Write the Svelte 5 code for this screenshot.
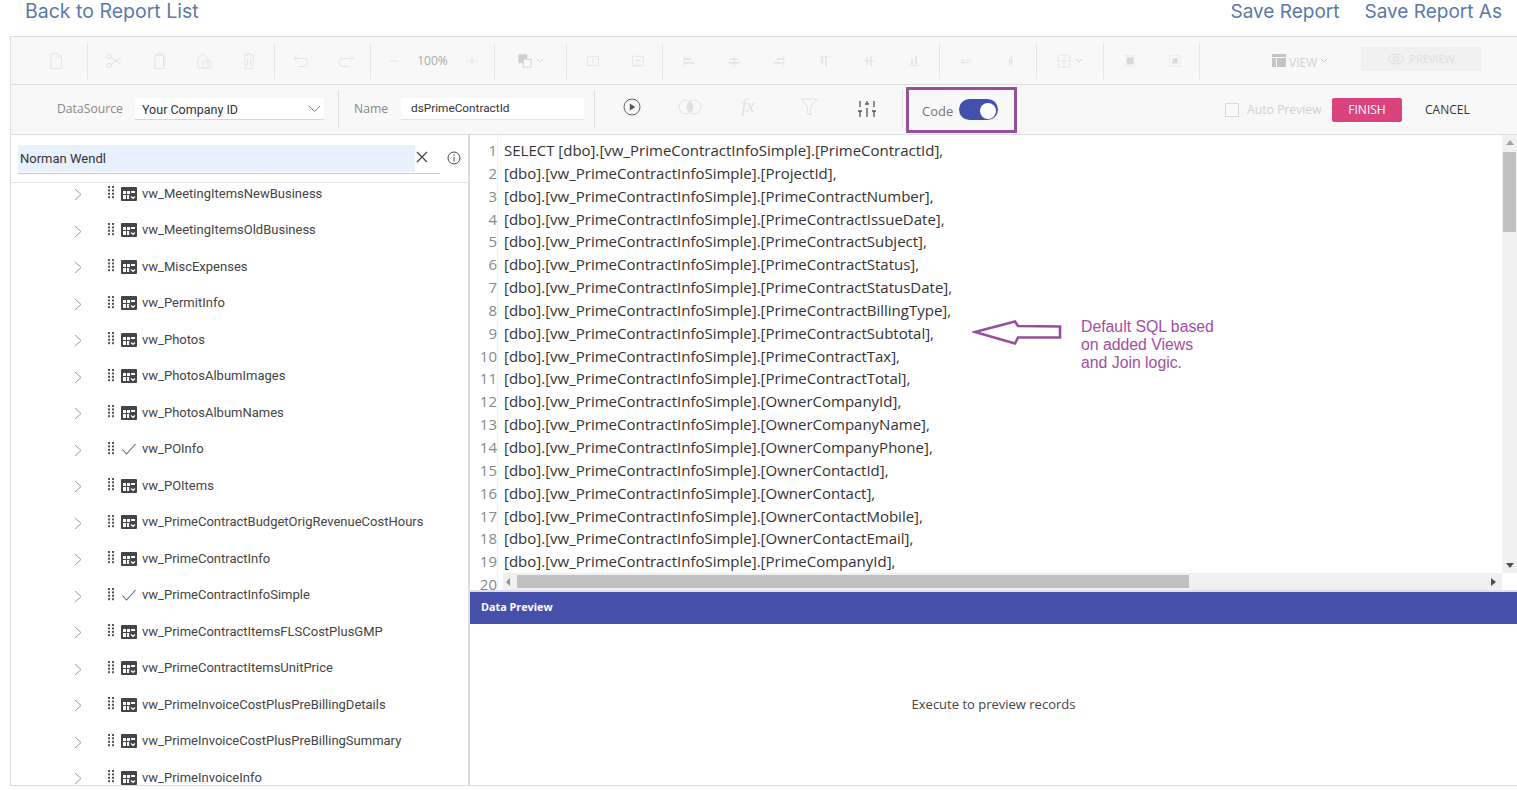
<script lang="ts">
    const views = [
        { name: 'vw_MeetingItemsNewBusiness' },
        { name: 'vw_MeetingItemsOldBusiness' },
        { name: 'vw_MiscExpenses' },
        { name: 'vw_PermitInfo' },
        { name: 'vw_Photos' },
        { name: 'vw_PhotosAlbumImages' },
        { name: 'vw_PhotosAlbumNames' },
        { name: 'vw_POInfo', checked: true },
        { name: 'vw_POItems' },
        { name: 'vw_PrimeContractBudgetOrigRevenueCostHours' },
        { name: 'vw_PrimeContractInfo' },
        { name: 'vw_PrimeContractInfoSimple', checked: true },
        { name: 'vw_PrimeContractItemsFLSCostPlusGMP' },
        { name: 'vw_PrimeContractItemsUnitPrice' },
        { name: 'vw_PrimeInvoiceCostPlusPreBillingDetails' },
        { name: 'vw_PrimeInvoiceCostPlusPreBillingSummary' },
        { name: 'vw_PrimeInvoiceInfo' }
    ];

    const columns = [
        'PrimeContractId', 'ProjectId', 'PrimeContractNumber', 'PrimeContractIssueDate',
        'PrimeContractSubject', 'PrimeContractStatus', 'PrimeContractStatusDate',
        'PrimeContractBillingType', 'PrimeContractSubtotal', 'PrimeContractTax',
        'PrimeContractTotal', 'OwnerCompanyId', 'OwnerCompanyName', 'OwnerCompanyPhone',
        'OwnerContactId', 'OwnerContact', 'OwnerContactMobile', 'OwnerContactEmail',
        'PrimeCompanyId'
    ];

    const lines = columns.map((c, i) => `${i === 0 ? 'SELECT ' : ''}[dbo].[vw_PrimeContractInfoSimple].[${c}],`);
    const gutter = Array.from({ length: 20 }, (_, i) => i + 1);
    const grip = [0, 1, 2, 3];
</script>

{#snippet alignIcon(d)}
    <span class="tool"><svg width="14" height="14" viewBox="0 0 18 18" fill="none" stroke="#e0e0e0"><path d={d} /></svg></span>
{/snippet}

<div class="page">
    <header class="top">
        <a href="#back">Back to Report List</a>
        <nav>
            <a href="#save">Save Report</a>
            <a href="#saveas">Save Report As</a>
        </nav>
    </header>

    <div class="shell">
        <div class="toolbar tools">
            <div class="group first">
                <span class="tool"><svg width="18" height="18" viewBox="0 0 18 18" fill="none" stroke="#e4e4e4"><path d="M4 1.500h7l3.500 3.500v11.500H4zM11 1.500V5h3.500" /></svg></span>
            </div>
            <div class="group">
                <span class="tool"><svg width="18" height="18" viewBox="0 0 18 18" fill="none" stroke="#e0e0e0"><circle cx="4" cy="4.500" r="2.200" /><circle cx="4" cy="13.500" r="2.200" /><path d="M6 5.500l10 7M6 12.500l10-7" /></svg></span>
                <span class="tool"><svg width="18" height="18" viewBox="0 0 18 18" fill="none" stroke="#e4e4e4"><path d="M5 3.500h8.500v13H5zM7 3.500V1.500h6l2 2v10h-2" /></svg></span>
                <span class="tool"><svg width="18" height="18" viewBox="0 0 18 18" fill="none" stroke="#e4e4e4"><path d="M3 6l5-4 5 4v10H3zM8 9h8v7H8z" /></svg></span>
                <span class="tool"><svg width="18" height="18" viewBox="0 0 18 18" fill="none" stroke="#e4e4e4"><path d="M3 3h12M5 3v13.500h8V3M7.500 6v8M10.500 6v8M7 3V1.500h4V3" /></svg></span>
            </div>
            <div class="group tight">
                <span class="tool"><svg width="18" height="18" viewBox="0 0 18 18" fill="none" stroke="#e4e4e4"><path d="M5 3L2 6.500 5 10M2 6.500h10a4 4 0 0 1 0 8H6" /></svg></span>
                <span class="tool"><svg width="18" height="18" viewBox="0 0 18 18" fill="none" stroke="#e4e4e4"><path d="M13 3l3 3.500L13 10M16 6.500H6a4 4 0 0 0 0 8h6" /></svg></span>
            </div>
            <div class="group">
                <span class="tool zoomitem"><svg width="10" height="10" viewBox="0 0 12 12" stroke="#e0e0e0"><path d="M1 6h10" /></svg></span>
                <span class="tool zoomitem pct">100%</span>
                <span class="tool zoomitem"><svg width="10" height="10" viewBox="0 0 12 12" stroke="#e0e0e0"><path d="M1 6h10M6 1v10" /></svg></span>
            </div>
            <div class="group">
                <span class="tool wide">
                    <svg width="14" height="14" viewBox="0 0 16 16" fill="none" stroke="#cfcfcf"><rect x="1" y="1" width="9" height="9" fill="#cfcfcf" /><rect x="6" y="6" width="9" height="9" fill="#f8f8f8" /></svg>
                    <svg width="8" height="6" viewBox="0 0 8 6" fill="none" stroke="#d4d4d4"><path d="M1 1l3 3 3-3" /></svg>
                </span>
            </div>
            <div class="group tight">
                {@render alignIcon('M2 3h14v12H2zM9 6v6M7.500 10.500L9 12l1.500-1.500')}
                {@render alignIcon('M2 3h14v12H2zM6 9h6M6 7.500h6')}
            </div>
            <div class="group">
                {@render alignIcon('M3 2v14M4 6h8M4 7h8M4 11h12M4 12h12')}
                {@render alignIcon('M9 2v14M4 6h10M4 7h10M2 11h14M2 12h14')}
                {@render alignIcon('M15 2v14M6 6h8M6 7h8M2 11h12M2 12h12')}
                {@render alignIcon('M2 3h14M6 4v8M7 4v8M11 4v12M12 4v12')}
                {@render alignIcon('M2 9h14M6 4v10M7 4v10M11 2v14M12 2v14')}
                {@render alignIcon('M2 15h14M6 6v8M7 6v8M11 2v12M12 2v12')}
            </div>
            <div class="group">
                {@render alignIcon('M2 8h14M2 11h14M5 7v5')}
                {@render alignIcon('M7 2v14M10 2v14M6 9h5M8.500 6v6')}
            </div>
            <div class="group">
                <span class="tool wide gridtool">
                    <svg width="14" height="14" viewBox="0 0 16 16" fill="none" stroke="#d8d8d8" stroke-dasharray="2 2"><rect x="1" y="1" width="14" height="14" /><path d="M8 1v14M1 8h14" /></svg>
                    <svg width="8" height="6" viewBox="0 0 8 6" fill="none" stroke="#d4d4d4"><path d="M1 1l3 3 3-3" /></svg>
                </span>
            </div>
            <div class="group tight">
                <span class="tool"><svg width="14" height="14" viewBox="0 0 16 16" fill="#d8d8d8" stroke="#e8e8e8"><rect x="4" y="4" width="8" height="8" /><path d="M1 2h14M1 14h14" fill="none" /></svg></span>
                <span class="tool"><svg width="14" height="14" viewBox="0 0 16 16" fill="#d8d8d8" stroke="#e8e8e8"><rect x="5" y="5" width="6" height="6" /><rect x="2" y="2" width="12" height="12" fill="none" /></svg></span>
            </div>
            <div class="view">
                <svg width="14" height="13" viewBox="0 0 14 13" fill="#c4c4c4"><rect width="14" height="3" /><rect y="4" width="4" height="9" /><rect x="5" y="4" width="9" height="9" /></svg>
                <span>VIEW</span>
                <svg width="8" height="6" viewBox="0 0 8 6" fill="none" stroke="#cccccc"><path d="M1 1l3 3 3-3" /></svg>
            </div>
            <div class="preview">
                <svg width="18" height="12" viewBox="0 0 18 12" fill="none" stroke="#dddddd"><path d="M1 6c2-3 5-5 8-5s6 2 8 5c-2 3-5 5-8 5S3 9 1 6z" /><circle cx="9" cy="6" r="2.500" /></svg>
                <span>PREVIEW</span>
            </div>
        </div>

        <div class="toolbar config">
            <label class="lbl source-lbl" for="src">DataSource</label>
            <div class="select" id="src">
                <span>Your Company ID</span>
                <svg width="13" height="8" viewBox="0 0 13 8" fill="none" stroke="#888888"><path d="M1 1l5.500 5.500L12 1" /></svg>
            </div>
            <div class="vsep sep-a"></div>
            <span class="lbl name-lbl">Name</span>
            <div class="name-input">dsPrimeContractId</div>
            <div class="vsep sep-b"></div>
            <span class="act"><svg width="18" height="18" viewBox="0 0 18 18" fill="none" stroke="#666666"><circle cx="9" cy="9" r="8" /><path d="M6.800 5.500v7l5.500-3.500z" fill="#555555" stroke="none" /></svg></span>
            <span class="act"><svg width="24" height="16" viewBox="0 0 24 16" fill="none" stroke="#e2e2e2"><circle cx="8" cy="8" r="7" /><circle cx="16" cy="8" r="7" /><path d="M12 2.500a7 7 0 0 1 0 11a7 7 0 0 1 0-11z" fill="#e2e2e2" /></svg></span>
            <span class="act fx">fx</span>
            <span class="act filter"><svg width="20" height="20" viewBox="0 0 20 20" fill="none" stroke="#e2e2e2"><path d="M2 2h16l-6.500 8v8l-3-2v-6z" /></svg></span>
            <span class="act sliders"><svg width="20" height="18" viewBox="0 0 20 18" fill="none" stroke="#555555" stroke-width="1.300"><path d="M3 1v6M1 11h4M3 11v6M10 1v3M8 4h4M10 8v9M17 1v6M15 11h4M17 11v6" /></svg></span>
            <div class="vsep sep-c"></div>
            <div class="code-box">
                <span>Code</span>
                <span class="switch"><span class="knob"></span></span>
            </div>
            <div class="auto">
                <span class="check"></span>
                <span>Auto Preview</span>
            </div>
            <button class="finish">FINISH</button>
            <button class="cancel">CANCEL</button>
        </div>

        <div class="body">
            <aside class="tree">
                <div class="search">
                    <div class="search-field">
                        <div class="search-text">Norman Wendl</div>
                        <svg class="clear" width="12" height="12" viewBox="0 0 12 12" stroke="#444444" stroke-width="1.200"><path d="M1 1l10 10M11 1L1 11" /></svg>
                    </div>
                    <svg width="14" height="14" viewBox="0 0 14 14" fill="none" stroke="#444444"><circle cx="7" cy="7" r="6" /><path d="M7 6v4.500M7 3.500v1.300" /></svg>
                </div>
                <div class="tree-list">
                    <ul>
                        {#each views as view}
                            <li>
                                <svg class="chev" width="8" height="13" viewBox="0 0 8 13" fill="none" stroke="#999999"><path d="M1 1l6 5.500L1 12" /></svg>
                                <svg class="grip" width="7" height="13" viewBox="0 0 7 13" fill="#555555">
                                    {#each grip as r}
                                        <rect y={r * 3.4} width="2" height="2" />
                                        <rect x="4" y={r * 3.4} width="2" height="2" />
                                    {/each}
                                </svg>
                                {#if view.checked}
                                    <svg class="kind" width="16" height="14" viewBox="0 0 16 14" fill="none" stroke="#666666" stroke-width="1.100"><path d="M1.500 7.500l4 4.500L14.500 2" /></svg>
                                {:else}
                                    <svg class="kind" width="16" height="14" viewBox="0 0 16 14">
                                        <rect width="16" height="14" rx="1" fill="#454545" />
                                        <path d="M2 4h3v3H2zM6 4h3v3H6zM10 4h4v2h-4zM2 8h3v4H2zM6 8h3v4H6z" fill="#ffffff" />
                                        <circle cx="12" cy="10" r="4" fill="#454545" />
                                        <path d="M10 9.500l2 2 2-2" fill="none" stroke="#ffffff" stroke-width="1.200" />
                                    </svg>
                                {/if}
                                <span>{view.name}</span>
                            </li>
                        {/each}
                    </ul>
                </div>
            </aside>

            <section class="main">
                <div class="editor">
                    <div class="gutter">
                        {#each gutter as n}
                            <div>{n}</div>
                        {/each}
                    </div>
                    <div class="editor-main">
                        <div class="editor-row">
                            <div class="code">
                                {#each lines as line}
                                    <div>{line}</div>
                                {/each}
                            </div>
                            <div class="vscroll">
                                <span class="tri up"></span>
                                <span class="vthumb"></span>
                                <span class="tri down"></span>
                            </div>
                        </div>
                        <div class="hbar">
                            <div class="hscroll">
                                <span class="tri left"></span>
                                <span class="hthumb"></span>
                                <span class="tri right"></span>
                            </div>
                            <div class="corner"></div>
                        </div>
                    </div>
                </div>
                <div class="preview-head">Data Preview</div>
                <div class="preview-body">Execute to preview records</div>

                <svg class="arrow" width="92" height="28" viewBox="0 0 92 28" fill="#ffffff" stroke="#964f9c" stroke-width="2.600">
                    <path d="M3 13L43 2.500 46 7 88 7.500V18.500H46L43 24.500z" />
                </svg>
                <div class="note">Default SQL based<br />on added Views<br />and Join logic.</div>
            </section>
        </div>
    </div>
</div>

<style>
    :global(body) {
        margin: 0;
        background: #fff;
    }
    .page {
        width: 1517px;
        height: 790px;
        overflow: hidden;
        font-family: Roboto, sans-serif;
        color: #333;
    }
    .top {
        height: 36px;
        box-sizing: border-box;
        display: flex;
        justify-content: space-between;
        padding: 0 15px 0 25px;
        font-family: Inter, sans-serif;
        font-size: 19.5px;
        line-height: 23px;
    }
    .top a {
        color: #5a79a8;
        text-decoration: none;
    }
    .top nav {
        display: flex;
        gap: 25px;
        font-size: 19px;
    }
    .shell {
        margin-left: 10px;
        height: 750px;
        box-sizing: border-box;
        border: 1px solid #dcdcdc;
        border-right: 0;
        display: flex;
        flex-direction: column;
    }
    .toolbar {
        display: flex;
        align-items: center;
        background: #f8f8f8;
        border-bottom: 1px solid #dcdcdc;
        box-sizing: border-box;
    }
    .tools {
        height: 48px;
        flex: none;
    }
    .group {
        display: flex;
        align-items: center;
        height: 36px;
        padding: 0 3px;
        border-right: 1px solid #e6e6e6;
    }
    .group.first {
        padding: 0 9px 0 22px;
    }
    .group.tight {
        padding-right: 2px;
    }
    .tool {
        width: 45px;
        display: flex;
        align-items: center;
        justify-content: center;
        gap: 4px;
    }
    .tool.zoomitem {
        width: 39px;
    }
    .tool.wide {
        width: 65px;
    }
    .tool.gridtool {
        width: 60px;
    }
    .pct {
        font-family: "Open Sans", sans-serif;
        font-size: 12px;
        color: #aaa;
    }
    .view {
        margin-left: 72px;
        width: 60px;
        display: flex;
        align-items: center;
        gap: 3px;
        font-family: "Open Sans", sans-serif;
        font-size: 12px;
        color: #d0d0d0;
    }
    .view span {
        margin-top: 4px;
    }
    .preview {
        margin-left: 29px;
        width: 120px;
        height: 24px;
        background: #f0f0f0;
        display: flex;
        align-items: center;
        justify-content: center;
        gap: 4px;
        font-family: "Open Sans", sans-serif;
        font-size: 11px;
        color: #e0e0e0;
        margin-bottom: 4px;
    }
    .config {
        height: 50px;
        flex: none;
        padding-bottom: 2px;
        font-family: "Open Sans", sans-serif;
        font-size: 12.2px;
    }
    .lbl {
        color: #888;
    }
    .source-lbl {
        margin-left: 46px;
        width: 78px;
    }
    .select {
        width: 189px;
        height: 22px;
        box-sizing: border-box;
        background: #fff;
        border-bottom: 1px solid #d8d8d8;
        display: flex;
        align-items: center;
        justify-content: space-between;
        padding: 2px 3px 0 7px;
        font-family: Roboto, sans-serif;
        font-size: 12.5px;
        color: #333;
    }
    .vsep {
        width: 1px;
        height: 38px;
        background: #e0e0e0;
    }
    .sep-a {
        margin-left: 14px;
    }
    .name-lbl {
        margin-left: 15px;
        width: 47px;
    }
    .name-input {
        width: 183px;
        height: 22px;
        box-sizing: border-box;
        background: #fff;
        border-bottom: 1px solid #e2e2e2;
        padding-left: 10px;
        font-family: Roboto, sans-serif;
        font-size: 11.8px;
        line-height: 21px;
        color: #333;
    }
    .sep-b {
        margin: 0 8px 0 10px;
    }
    .act {
        width: 58px;
        display: flex;
        justify-content: center;
        align-items: center;
        margin-top: -4px;
    }
    .act.filter {
        margin-left: 3px;
    }
    .act.sliders {
        margin-top: 1px;
    }
    .fx {
        font-family: "Liberation Serif", serif;
        font-style: italic;
        font-size: 18px;
        color: #e0e0e0;
    }
    .sep-c {
        margin-left: 6px;
    }
    .code-box {
        margin: 2px 0 0 3px;
        width: 111px;
        height: 46px;
        box-sizing: border-box;
        border: 3px solid #964f9c;
        display: flex;
        align-items: center;
        padding-left: 13px;
        gap: 6px;
        color: #777;
        font-size: 13px;
    }
    .code-box span:first-child {
        margin-top: 2px;
    }
    .switch {
        width: 39px;
        height: 21px;
        border-radius: 11px;
        background: #4351ad;
        display: flex;
        align-items: center;
        justify-content: flex-end;
        padding-right: 2px;
        box-sizing: border-box;
    }
    .knob {
        width: 16px;
        height: 16px;
        border-radius: 50%;
        background: #fff;
    }
    .auto {
        margin: 2px 0 0 208px;
        width: 107px;
        display: flex;
        align-items: center;
        gap: 8px;
        color: #d0d0d0;
    }
    .check {
        width: 14px;
        height: 14px;
        box-sizing: border-box;
        border: 1px solid #d8d8d8;
        background: #fafafa;
    }
    .finish {
        width: 70px;
        height: 24px;
        margin-top: 2px;
        border: 0;
        border-radius: 2px;
        background: #d9447f;
        color: #fff;
        font-family: "Open Sans", sans-serif;
        font-size: 12px;
        padding: 0;
    }
    .cancel {
        margin: 2px 0 0 23px;
        padding: 0;
        border: 0;
        background: none;
        color: #333;
        font-family: "Open Sans", sans-serif;
        font-size: 12px;
    }
    .body {
        flex: 1;
        min-height: 0;
        display: flex;
    }
    .tree {
        width: 459px;
        flex: none;
        border-right: 2px solid #dcdcdc;
        box-sizing: border-box;
        display: flex;
        flex-direction: column;
    }
    .search {
        height: 48px;
        flex: none;
        box-sizing: border-box;
        border-bottom: 1px solid #e4e4e4;
        display: flex;
        align-items: flex-start;
        padding: 10px 6px 0 7px;
        gap: 7px;
    }
    .search svg:last-child {
        margin-top: 6px;
    }
    .search-field {
        width: 422px;
        height: 29px;
        box-sizing: border-box;
        border-bottom: 1px solid #c8c8c8;
        display: flex;
        align-items: flex-start;
    }
    .search-text {
        width: 397px;
        height: 27px;
        background: #e8f0fe;
        padding-left: 2px;
        box-sizing: border-box;
        font-size: 13px;
        line-height: 27px;
        color: #333;
    }
    .clear {
        margin: 7px 0 0 1px;
    }
    .tree-list {
        flex: 1;
        min-height: 0;
        overflow: hidden;
    }
    .tree-list ul {
        list-style: none;
        margin: -8px 0 0;
        padding: 0;
    }
    .tree-list li {
        height: 36.5px;
        display: flex;
        align-items: center;
        font-size: 13px;
        color: #444;
        white-space: nowrap;
    }
    .chev {
        margin: 3px 0 0 63px;
    }
    .grip {
        margin: -1px 0 0 26px;
    }
    .kind {
        margin: 1px 5px 0 6px;
    }
    .main {
        flex: 1;
        min-width: 0;
        display: flex;
        flex-direction: column;
        position: relative;
    }
    .editor {
        height: 455px;
        flex: none;
        display: flex;
        overflow: hidden;
        border-bottom: 2px solid #dfdfe8;
        box-sizing: content-box;
        font-family: "Open Sans", sans-serif;
        font-size: 15px;
        line-height: 22.85px;
        color: #333;
    }
    .gutter {
        width: 27px;
        flex: none;
        text-align: right;
        padding-top: 4px;
        color: #888;
        border-right: 1px solid #f0f0f0;
    }
    .editor-main {
        flex: 1;
        min-width: 0;
        display: flex;
        flex-direction: column;
        padding-left: 5px;
    }
    .editor-row {
        flex: 1;
        min-height: 0;
        display: flex;
    }
    .code {
        flex: 1;
        padding: 4px 0 0 1px;
        overflow: hidden;
        white-space: nowrap;
    }
    .vscroll {
        width: 15px;
        flex: none;
        background: #f0f0f0;
        display: flex;
        flex-direction: column;
        align-items: center;
    }
    .vthumb {
        width: 13px;
        height: 80px;
        margin-top: 7px;
        background: #c1c1c1;
    }
    .tri {
        width: 0;
        height: 0;
        border: 4px solid transparent;
    }
    .tri.up {
        margin-top: 5px;
        border-top: 0;
        border-bottom: 5px solid #a0a0a0;
    }
    .tri.down {
        margin-top: auto;
        margin-bottom: 5px;
        border-bottom: 0;
        border-top: 5px solid #505050;
    }
    .hbar {
        height: 17px;
        flex: none;
        display: flex;
    }
    .hscroll {
        flex: 1;
        background: #f0f0f0;
        display: flex;
        align-items: center;
    }
    .tri.left {
        margin-left: 3px;
        border-left: 0;
        border-right: 4px solid #909090;
    }
    .hthumb {
        width: 672px;
        height: 13px;
        margin-left: 7px;
        background: #c1c1c1;
    }
    .tri.right {
        margin-left: auto;
        margin-right: 6px;
        border-right: 0;
        border-left: 5px solid #505050;
    }
    .corner {
        width: 15px;
        background: #fff;
    }
    .preview-head {
        height: 32px;
        flex: none;
        background: #4650ab;
        color: #fff;
        font-family: "Open Sans", sans-serif;
        font-size: 10.8px;
        font-weight: 700;
        line-height: 30px;
        padding-left: 11px;
    }
    .preview-body {
        flex: 1;
        display: flex;
        align-items: center;
        justify-content: center;
        padding-bottom: 2px;
        font-family: "Open Sans", sans-serif;
        font-size: 13px;
        color: #444;
    }
    .arrow {
        position: absolute;
        left: 502px;
        top: 184px;
    }
    .note {
        position: absolute;
        left: 611px;
        top: 183px;
        font-family: "Liberation Sans", sans-serif;
        font-size: 15.8px;
        line-height: 18px;
        color: #a24da3;
    }
</style>
